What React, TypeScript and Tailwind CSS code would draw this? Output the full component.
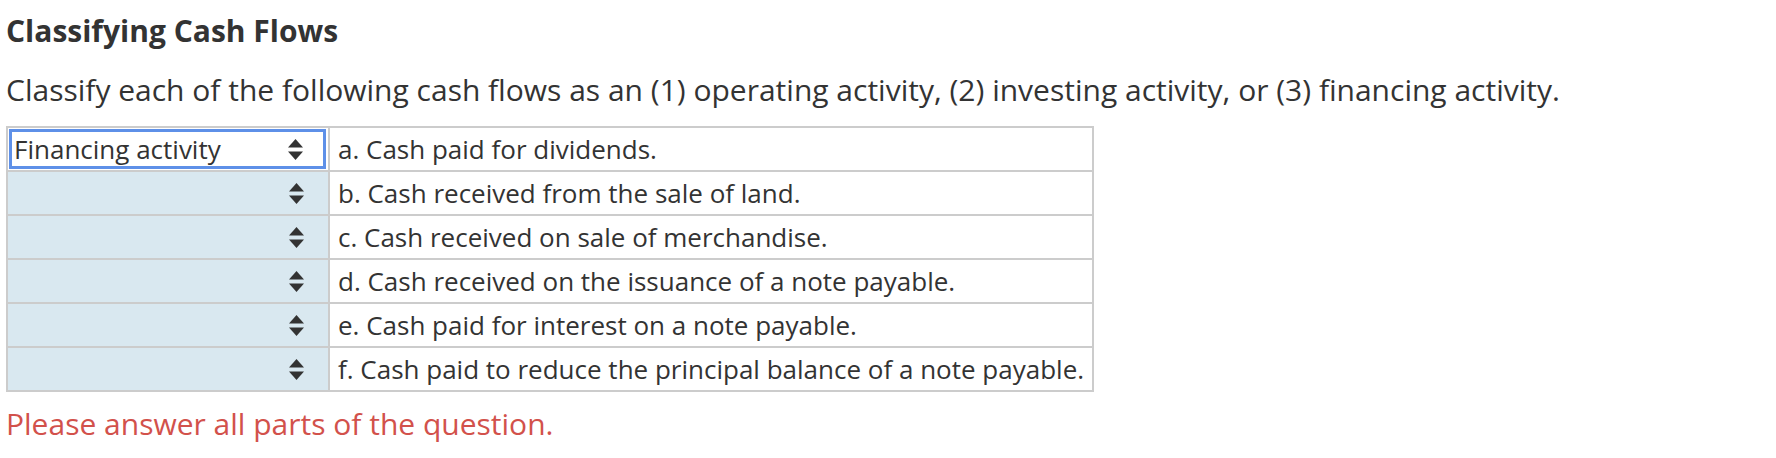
import React from "react";

const rows = [
  { value: "Financing activity", text: "a. Cash paid for dividends." },
  { value: "", text: "b. Cash received from the sale of land." },
  { value: "", text: "c. Cash received on sale of merchandise." },
  { value: "", text: "d. Cash received on the issuance of a note payable." },
  { value: "", text: "e. Cash paid for interest on a note payable." },
  { value: "", text: "f. Cash paid to reduce the principal balance of a note payable." },
];

function Arrows() {
  return (
    <svg width="15" height="21" viewBox="0 0 15 21" className="shrink-0">
      <polygon points="7.5,0 15,8.5 0,8.5" fill="#333333" />
      <polygon points="0,12.5 15,12.5 7.5,21" fill="#333333" />
    </svg>
  );
}

export default function App() {
  return (
    <div className="min-h-[458px] w-[1776px] bg-white pl-[6px] pt-[15px] font-['Open_Sans',sans-serif] text-[#333333]">
      <h2 className="text-[30px] font-bold leading-[32px]">Classifying Cash Flows</h2>
      <p className="mt-[27px] text-[30px] leading-[32px]">
        Classify each of the following cash flows as an (1) operating activity, (2) investing activity, or (3) financing activity.
      </p>
      <div className="mt-[20px] flex w-max flex-col border-l-2 border-t-2 border-[#cccccc]">
        {rows.map((r, i) => (
          <div key={i} className="flex h-[44px]">
            <div
              className={
                i === 0
                  ? "flex w-[322px] border-b-2 border-r-2 border-[#cccccc] bg-white p-[1px] pr-[2px]"
                  : "flex w-[322px] border-b-2 border-r-2 border-[#cccccc] bg-[#d9e8f0]"
              }
            >
              {i === 0 ? (
                <div className="flex flex-1 items-center border-[3px] border-[#5e90e8] bg-white pl-[2px] pr-[20px]">
                  <span className="flex-1 text-[26px] leading-[32px]">{r.value}</span>
                  <Arrows />
                </div>
              ) : (
                <div className="flex flex-1 items-center justify-end pr-[24px]">
                  <Arrows />
                </div>
              )}
            </div>
            <div className="flex w-[764px] items-center border-b-2 border-r-2 border-[#cccccc] bg-white pl-[8px] text-[26px] leading-[32px]">
              {r.text}
            </div>
          </div>
        ))}
      </div>
      <p className="mt-[16px] text-[30px] leading-[32px] text-[#d2514b]">Please answer all parts of the question.</p>
    </div>
  );
}
